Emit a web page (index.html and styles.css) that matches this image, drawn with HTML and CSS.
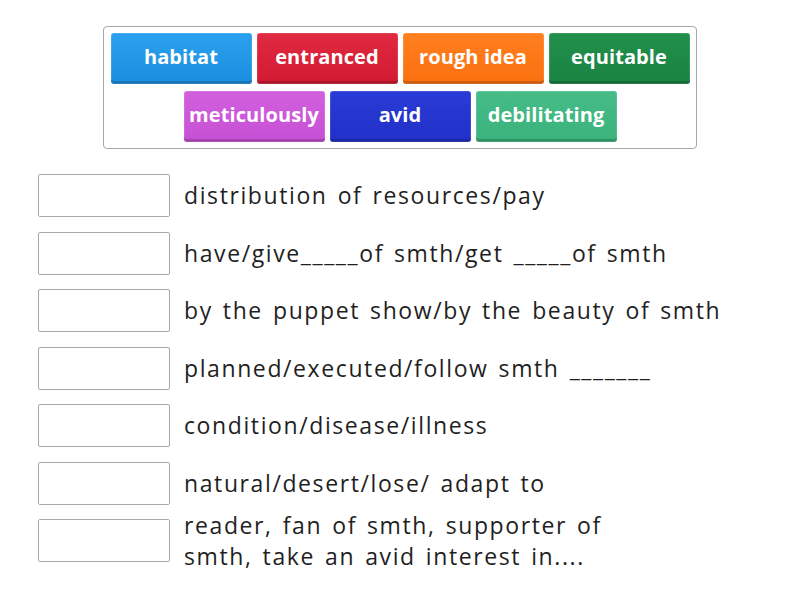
FILE: index.html
```html
<!DOCTYPE html>
<html>
<head>
<meta charset="utf-8">
<link rel="stylesheet" href="styles.css">
</head>
<body>
<div class="page">
  <div class="bank">
    <div class="tile blue">habitat</div>
    <div class="tile red">entranced</div>
    <div class="tile orange">rough idea</div>
    <div class="tile green">equitable</div>
    <div class="tile purple">meticulously</div>
    <div class="tile navy">avid</div>
    <div class="tile teal">debilitating</div>
  </div>
  <div class="rows">
    <div class="row"><div class="slot"></div><div class="clue">distribution of resources/pay</div></div>
    <div class="row"><div class="slot"></div><div class="clue">have/give_____of smth/get _____of smth</div></div>
    <div class="row"><div class="slot"></div><div class="clue">by the puppet show/by the beauty of smth</div></div>
    <div class="row"><div class="slot"></div><div class="clue">planned/executed/follow smth _______</div></div>
    <div class="row"><div class="slot"></div><div class="clue">condition/disease/illness</div></div>
    <div class="row"><div class="slot"></div><div class="clue">natural/desert/lose/ adapt to</div></div>
    <div class="row"><div class="slot"></div><div class="clue">reader, fan of smth, supporter of<br>smth, take an avid interest in....</div></div>
  </div>
</div>
</body>
</html>
```

FILE: styles.css
```css
html, body {
  margin: 0;
  padding: 0;
  background: #ffffff;
  font-family: "Open Sans", "Liberation Sans", sans-serif;
}

.page {
  padding-top: 26px;
  min-height: 600px;
  box-sizing: border-box;
}

.bank {
  margin-left: 103px;
  width: 594px;
  height: 123px;
  box-sizing: border-box;
  border: 1px solid #a8a8a8;
  border-radius: 4px;
  padding: 6px 6px;
  display: flex;
  flex-wrap: wrap;
  justify-content: center;
  align-content: flex-start;
  gap: 7px 5px;
}

.tile {
  width: 141px;
  height: 51px;
  box-sizing: border-box;
  border-radius: 3px;
  color: #ffffff;
  font-weight: 700;
  font-size: 20px;
  display: flex;
  align-items: center;
  justify-content: center;
  padding-bottom: 5px;
  box-shadow: inset 0 -3px 0 rgba(0,0,0,0.18), inset 0 0 0 1px rgba(255,255,255,0.12);
  white-space: nowrap;
  letter-spacing: 0.1px;
}

.blue { background: linear-gradient(#2aa1ee, #1b8edf); }
.red { background: linear-gradient(#e02a40, #d21a32); }
.orange { background: linear-gradient(#ff7f1f, #fb700f); }
.green { background: linear-gradient(#21904b, #1a8343); }
.purple { background: linear-gradient(#d260de, #c650d4); }
.navy { background: linear-gradient(#2a3cd6, #2030c8); }
.teal { background: linear-gradient(#46bd88, #3bb27c); }

.rows {
  margin-top: 25px;
  margin-left: 38px;
  display: flex;
  flex-direction: column;
  gap: 14.5px;
}

.row {
  display: flex;
  align-items: center;
  height: 43px;
}

.slot {
  width: 132px;
  height: 43px;
  box-sizing: border-box;
  border: 1px solid #a8a8a8;
  border-radius: 2px;
  flex: none;
  margin-right: 14px;
}

.clue {
  font-size: 23px;
  line-height: 31px;
  letter-spacing: 1.6px;
  word-spacing: 2.5px;
  color: #1f1f1f;
  white-space: nowrap;
}
```
